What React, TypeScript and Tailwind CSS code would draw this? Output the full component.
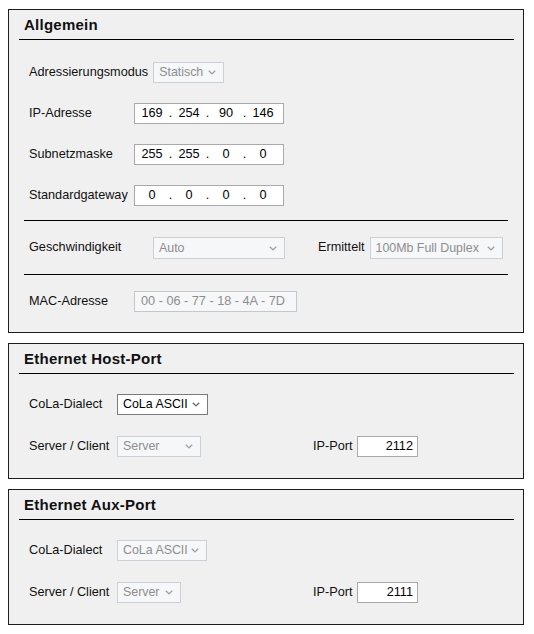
import React from "react";

const font = { fontFamily: '"Liberation Sans", Arial, sans-serif' };

function Chevron({ color = "#8a8a8a" }: { color?: string }) {
  return (
    <svg width="8" height="5" viewBox="0 0 8 5" className="shrink-0">
      <path d="M0.8 0.8 L4 3.9 L7.2 0.8" fill="none" stroke={color} strokeWidth="1.4" />
    </svg>
  );
}

function Select({
  value,
  width,
  disabled = true,
  height = 21,
}: {
  value: string;
  width: number;
  disabled?: boolean;
  height?: number;
}) {
  return (
    <div
      className={
        "flex items-center justify-between pl-[5px] pr-[7px] border shrink-0 text-[12.4px] " +
        (disabled
          ? "bg-[#f5f7f9] border-[#ccd0d5] text-[#8e8e8e]"
          : "bg-white border-[#7a7a7a] text-black")
      }
      style={{ width, height }}
    >
      <span className="leading-none whitespace-nowrap">{value}</span>
      <Chevron color={disabled ? "#9aa0a6" : "#6a6a6a"} />
    </div>
  );
}

function IpInput({ parts }: { parts: string[] }) {
  return (
    <div className="flex items-center h-[21px] w-[150px] bg-white border border-[#a9a9a9] pl-[2px] text-black">
      {parts.map((p, i) => (
        <React.Fragment key={i}>
          {i > 0 && <span className="w-[7px] text-center leading-none">.</span>}
          <span className="w-[30px] text-center leading-none">{p}</span>
        </React.Fragment>
      ))}
    </div>
  );
}

function Label({ children, w }: { children: React.ReactNode; w?: string }) {
  return <span className={"whitespace-nowrap text-[#111] " + (w ?? "")}>{children}</span>;
}

function Panel({ title, children, pb }: { title: string; children: React.ReactNode; pb: string }) {
  return (
    <div className={"border border-[#1e1e1e] bg-[#f0f0f0] " + pb}>
      <div className="ml-[10px] mr-[9px] h-[30px] border-b border-black pl-[5px] pt-[6px]">
        <span className="text-[15px] font-bold leading-[18px] tracking-[0.25px] text-[#111] block">{title}</span>
      </div>
      {children}
    </div>
  );
}

function PortInput({ value }: { value: string }) {
  return (
    <div className="flex items-center justify-end h-[21px] w-[61px] bg-white border border-[#a9a9a9] pr-[4px] text-black leading-none">
      {value}
    </div>
  );
}

export default function App() {
  return (
    <div className="bg-white w-[534px] h-[634px] pt-[9px] pl-[8px] text-[12.7px]" style={font}>
      <div className="w-[516px] flex flex-col gap-[10px]">
        <Panel title="Allgemein" pb="pb-[20px]">
          <div className="pl-[20px] pr-[15px] flex flex-col">
            <div className="mt-[22px] flex items-center h-[21px] gap-[5px]">
              <Label>Adressierungsmodus</Label>
              <Select value="Statisch" width={71} />
            </div>
            <div className="mt-[20px] flex items-center h-[21px]">
              <Label w="w-[105px]">IP-Adresse</Label>
              <IpInput parts={["169", "254", "90", "146"]} />
            </div>
            <div className="mt-[20px] flex items-center h-[21px]">
              <Label w="w-[105px]">Subnetzmaske</Label>
              <IpInput parts={["255", "255", "0", "0"]} />
            </div>
            <div className="mt-[20px] flex items-center h-[21px]">
              <Label w="w-[105px]">Standardgateway</Label>
              <IpInput parts={["0", "0", "0", "0"]} />
            </div>
          </div>
          <div className="mx-[15px] mt-[14px] h-px bg-black" />
          <div className="pl-[20px] mt-[16px] flex items-center h-[22px]">
            <div className="w-[289px] flex items-center">
              <Label w="w-[124px]">Geschwindigkeit</Label>
              <Select value="Auto" width={132} height={22} />
            </div>
            <Label w="mr-[5px]">Ermittelt</Label>
            <Select value="100Mb Full Duplex" width={133} height={22} />
          </div>
          <div className="mx-[15px] mt-[15px] h-px bg-black" />
          <div className="pl-[20px] mt-[16px] flex items-center h-[21px]">
            <Label w="w-[105px]">MAC-Adresse</Label>
            <div className="flex items-center h-[21px] w-[163px] bg-[#f5f7f9] border border-[#c4c8cd] pl-[6px] text-[#8e8e8e] leading-none whitespace-nowrap">
              00 - 06 - 77 - 18 - 4A - 7D
            </div>
          </div>
        </Panel>

        <Panel title="Ethernet Host-Port" pb="pb-[21px]">
          <div className="pl-[20px] flex flex-col">
            <div className="mt-[20px] flex items-center h-[21px]">
              <Label w="w-[88px]">CoLa-Dialect</Label>
              <Select value="CoLa ASCII" width={91} disabled={false} />
            </div>
            <div className="mt-[21px] flex items-center h-[21px]">
              <div className="w-[284px] flex items-center">
                <Label w="w-[88px]">Server / Client</Label>
                <Select value="Server" width={84} />
              </div>
              <Label w="w-[44px]">IP-Port</Label>
              <PortInput value="2112" />
            </div>
          </div>
        </Panel>

        <Panel title="Ethernet Aux-Port" pb="pb-[21px]">
          <div className="pl-[20px] flex flex-col">
            <div className="mt-[20px] flex items-center h-[21px]">
              <Label w="w-[88px]">CoLa-Dialect</Label>
              <Select value="CoLa ASCII" width={90} />
            </div>
            <div className="mt-[21px] flex items-center h-[21px]">
              <div className="w-[284px] flex items-center">
                <Label w="w-[88px]">Server / Client</Label>
                <Select value="Server" width={64} />
              </div>
              <Label w="w-[44px]">IP-Port</Label>
              <PortInput value="2111" />
            </div>
          </div>
        </Panel>
      </div>
    </div>
  );
}
